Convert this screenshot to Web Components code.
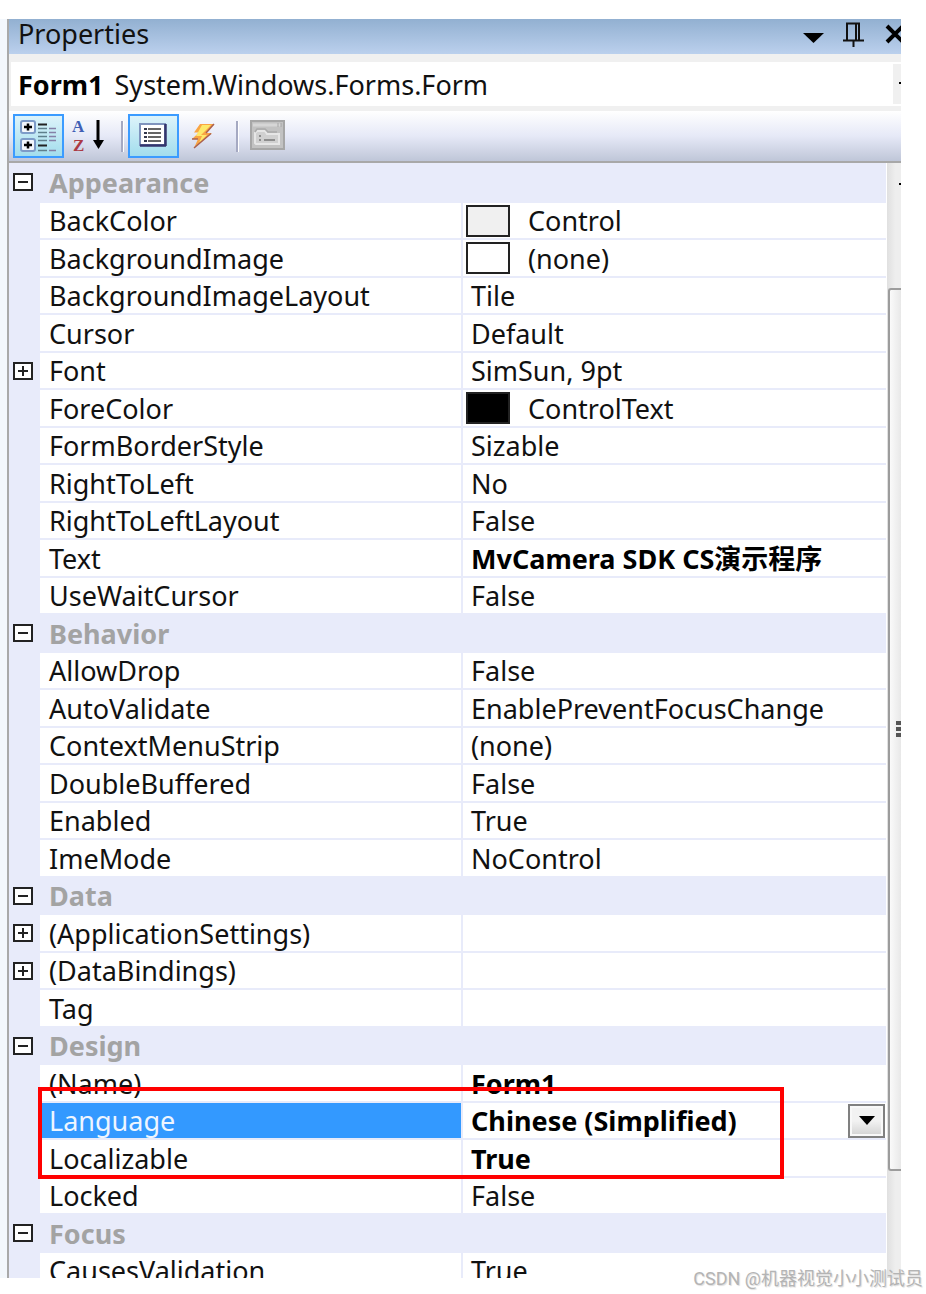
<!DOCTYPE html>
<html lang="en">
<head>
<meta charset="utf-8">
<title>Properties</title>
<style>
  body {
    margin: 0;
    background: white;
    color: #111;
    font-family: "Noto Sans", "Noto Sans CJK SC", sans-serif;
    font-size: 27px;
  }
</style>
</head>
<body>
<properties-window>
  <title-bar slot="title">Properties</title-bar>
  <object-picker slot="picker" name="Form1">System.Windows.Forms.Form</object-picker>
  <tool-strip slot="tools"></tool-strip>
  <property-grid></property-grid>
  <scroll-strip slot="scroll"></scroll-strip>
</properties-window>
<water-mark>CSDN @机器视觉小小测试员</water-mark>

<script>
// outer frame: title, picker, tools, then grid + scrollbar
class PropertiesWindow extends HTMLElement {
  constructor() {
    super()
    this.attachShadow({mode: 'open'})
    this.shadowRoot.innerHTML = `
      <style>
        :host {
          display: block;
          height: 100vh;
          box-sizing: border-box;
          padding: 19px 25px 16px 0;
        }
        .edge {
          height: 100%;
          box-sizing: border-box;
          padding-left: 7px;
          background: #f3f7fc;
        }
        section {
          display: flex;
          flex-direction: column;
          height: 100%;
          box-sizing: border-box;
          border-left: 2px solid #a9a9a9;
          background: #f0f0f0;
        }
        .body {
          display: flex;
          flex: 1;
          min-height: 0;
          background: white;
        }
        .grid {
          flex: 1;
          min-width: 0;
          padding-right: 1px;
          overflow: hidden;
        }
      </style>
      <div class="edge">
        <section aria-label="Properties">
          <slot name="title"></slot>
          <slot name="picker"></slot>
          <slot name="tools"></slot>
          <div class="body">
            <div class="grid"><slot></slot></div>
            <slot name="scroll"></slot>
          </div>
        </section>
      </div>
    `
  }
}

class TitleBar extends HTMLElement {
  constructor() {
    super()
    this.attachShadow({mode: 'open'})
    this.shadowRoot.innerHTML = `
      <style>
        :host {
          display: flex;
          flex: none;
          align-items: flex-start;
          height: 35px;
          padding-left: 9px;
          background: linear-gradient(#92b0d1, #bbd0ed);
        }
        h1 {
          flex: 1;
          margin: 0;
          font-size: 27px;
          font-weight: 400;
          line-height: 30px;
        }
        nav {
          display: flex;
          width: 107px;
          overflow: hidden;
        }
        button {
          flex: none;
          width: 40px;
          height: 35px;
          padding: 0;
          border: 0;
          background: none;
        }
        svg { display: block; }
      </style>
      <h1><slot></slot></h1>
      <nav>
        <button aria-label="Window position"><svg width="40" height="35"><path d="M9 14h21l-10.500 10z"/></svg></button>
        <button aria-label="Auto hide"><svg width="40" height="35"><path d="M12 4.500h14M13 4v17M22 4v17M25 4v17M9 21.500h21M19.500 22v6" fill="none" stroke="#111" stroke-width="2"/></svg></button>
        <button aria-label="Close"><svg width="40" height="35"><path d="M13 7l16 16M29 7L13 23" fill="none" stroke="#000" stroke-width="4"/></svg></button>
      </nav>
    `
  }
}

class ObjectPicker extends HTMLElement {
  constructor() {
    super()
    this.attachShadow({mode: 'open'})
  }

  connectedCallback() {
    this.shadowRoot.innerHTML = `
      <style>
        :host {
          display: block;
          flex: none;
          padding: 8px 0 5px 2px;
          background: #f0f0f0;
        }
        button {
          display: flex;
          align-items: center;
          gap: 11px;
          width: 100%;
          height: 44px;
          padding: 0 0 0 7px;
          border: 0;
          background: white;
          color: inherit;
          font: inherit;
        }
        b { color: black; }
        svg {
          margin-left: auto;
          background: #f0f0f0;
        }
      </style>
      <button aria-haspopup="listbox">
        <b>${this.getAttribute('name')}</b>
        <span><slot></slot></span>
        <svg width="8" height="40"><path d="M6 18h2v2h-2z"/></svg>
      </button>
    `
  }
}

class ToolStrip extends HTMLElement {
  constructor() {
    super()
    this.attachShadow({mode: 'open'})
    this.shadowRoot.innerHTML = `
      <style>
        :host {
          display: flex;
          flex: none;
          height: 50px;
          padding-left: 4px;
          align-items: center;
          border-bottom: 2px solid #a8a8a8;
          background: linear-gradient(#fff, #e6e9f7 50%, #bfc6d8);
        }
        button {
          width: 51px;
          height: 44px;
          padding: 0;
          border: 0;
          background: none;
        }
        button[aria-pressed=true] {
          background: linear-gradient(#e0f4fb, #9fdcec);
          box-shadow: inset 0 0 0 2px #3b9bff;
        }
        i {
          flex: none;
          width: 3px;
          height: 31px;
          box-sizing: border-box;
          margin: 0 4px 0 6px;
          border-right: 1px solid white;
          background: #a5a9c2;
        }
        svg { display: block; }
        text {
          font: bold 17px "Liberation Serif", serif;
        }
      </style>
      <button aria-label="Categorized" aria-pressed="true">
        <svg width="51" height="44">
          <g fill="#f2f6fc" stroke="#7d9bc8" stroke-width="2">
            <rect x="8" y="7" width="14" height="12" rx="2"/>
            <rect x="8" y="25" width="14" height="12" rx="2"/>
          </g>
          <path d="M11 13h8M15 9.500v7M11 31h8M15 27.500v7" stroke="#000" stroke-width="2.500"/>
          <path d="M25 10.500h9M25 31.500h9" stroke="#222" stroke-width="2"/>
          <path d="M25 14.500h9M25 18.500h9M25 22.500h9M25 26.500h9M25 36.500h9" stroke="#5f7f8c" stroke-width="1.500"/>
          <path d="M36 14.500h7M36 18.500h7M36 22.500h7M36 26.500h7M36 36.500h7" stroke="#8580a8" stroke-width="1.500"/>
        </svg>
      </button>
      <button aria-label="Alphabetical">
        <svg width="51" height="44">
          <text x="8" y="18" fill="#3f5fb5">A</text>
          <text x="9" y="37" fill="#ab3a44">Z</text>
          <path d="M34 6v22" stroke="#000" stroke-width="3"/>
          <path d="M29 26h11l-5.500 9z"/>
        </svg>
      </button>
      <i></i>
      <button aria-label="Properties" aria-pressed="true">
        <svg width="51" height="44">
          <rect x="12" y="10" width="25" height="21" fill="#fff" stroke="#7f94bd" stroke-width="2"/>
          <path d="M12 31.500h26M37.500 10v22" stroke="#34356c" stroke-width="2.500"/>
          <path d="M16 15h3M16 19h3M16 23h3M16 27h3" stroke="#33384c" stroke-width="2"/>
          <path d="M20 15h13M20 19h13M20 23h13M20 27h13" stroke="#333" stroke-width="1.500"/>
        </svg>
      </button>
      <button aria-label="Events">
        <svg width="51" height="44">
          <path d="M21 10h14l-8 9h6L15 34l4-9h-6l7-6.500h-5z" fill="#f9a544"/>
          <path d="M23 11h9L22 21h6l-8 8 3-7h-6z" fill="#fde96b"/>
          <path d="M35 10l-8 9M32 19.500L15 34M19 25h-6" fill="none" stroke="#a96050" stroke-width="1.500"/>
        </svg>
      </button>
      <i></i>
      <button aria-label="Property Pages" disabled>
        <svg width="51" height="44">
          <rect x="8" y="7" width="33" height="28" fill="#c2c2c2" stroke="#a6a6a6" stroke-width="2"/>
          <path d="M10 11h28" stroke="#d6d6d6" stroke-width="3"/>
          <path d="M35 9v4M38 9v4" stroke="#a6a6a6"/>
          <path d="M12 29V19l2-2h8l2 3h12v10H13z" fill="#d0d0d0" stroke="#e6e6e6" stroke-width="2"/>
          <path d="M12 18l2-3h8l3 3h9" fill="none" stroke="#aaa" stroke-width="1.500"/>
          <path d="M16 22h2M16 26h2M21 26h11" stroke="#8d8d8d" stroke-width="2"/>
        </svg>
      </button>
    `
  }
}

// [name, value, options]; a row without a value is a category
const rows = [
  ['Appearance'],
  ['BackColor', 'Control', {swatch: '#f0f0f0'}],
  ['BackgroundImage', '(none)', {swatch: '#fff'}],
  ['BackgroundImageLayout', 'Tile'],
  ['Cursor', 'Default'],
  ['Font', 'SimSun, 9pt', {expand: true}],
  ['ForeColor', 'ControlText', {swatch: '#000'}],
  ['FormBorderStyle', 'Sizable'],
  ['RightToLeft', 'No'],
  ['RightToLeftLayout', 'False'],
  ['Text', 'MvCamera SDK CS演示程序', {bold: true}],
  ['UseWaitCursor', 'False'],
  ['Behavior'],
  ['AllowDrop', 'False'],
  ['AutoValidate', 'EnablePreventFocusChange'],
  ['ContextMenuStrip', '(none)'],
  ['DoubleBuffered', 'False'],
  ['Enabled', 'True'],
  ['ImeMode', 'NoControl'],
  ['Data'],
  ['(ApplicationSettings)', '', {expand: true}],
  ['(DataBindings)', '', {expand: true}],
  ['Tag', ''],
  ['Design'],
  ['(Name)', 'Form1', {bold: true}],
  ['Language', 'Chinese (Simplified)', {bold: true, select: true}],
  ['Localizable', 'True', {bold: true}],
  ['Locked', 'False'],
  ['Focus'],
  ['CausesValidation', 'True']
]

class PropertyGrid extends HTMLElement {
  constructor() {
    super()
    this.attachShadow({mode: 'open'})
  }

  expander(open, name) {
    return `
      <button class="box" aria-expanded="${open}" aria-label="${name}">
        <svg width="20" height="18">
          <rect x="1" y="1" width="18" height="16" fill="white" stroke="#222" stroke-width="2"/>
          <path d="M5 9h10${open ? '' : 'M10 4v10'}" stroke="#222" stroke-width="2"/>
        </svg>
      </button>`
  }

  row([name, value, opt = {}]) {
    if (value === undefined) {
      return `
        <tr class="category">
          <td class="gutter">${this.expander(true, name)}</td>
          <th colspan="2" scope="colgroup">${name}</th>
        </tr>`
    }
    let cell = value
    if (opt.swatch) {
      cell = `<div class="color"><span style="background: ${opt.swatch}"></span>${value}</div>`
    }
    if (opt.select) {
      cell = `
        <div class="edit">
          <select aria-labelledby="language"><option>${value}</option></select>
          <button class="drop" aria-label="Open list">
            <svg width="16" height="9"><path d="M0 0h16l-8 9z"/></svg>
          </button>
        </div>
        <mark-box></mark-box>`
    }
    return `
      <tr class="${opt.select ? 'selected' : ''}">
        <td class="gutter">${opt.expand ? this.expander(false, name) : ''}</td>
        <th scope="row" ${opt.select ? 'id="language"' : ''}>${name}</th>
        <td class="${opt.bold ? 'bold' : ''}">${cell}</td>
      </tr>`
  }

  connectedCallback() {
    this.shadowRoot.innerHTML = `
      <style>
        :host { display: block; }
        table {
          width: 100%;
          table-layout: fixed;
          border-spacing: 0;
          background: white;
        }
        .icons { width: 31px; }
        tr { height: 37px; }
        tr:nth-child(odd) { height: 38px; }
        tr:first-child { height: 40px; }
        td, th {
          padding: 0 0 0 8px;
          border-bottom: 2px solid #e8ebfa;
          font-weight: 400;
          line-height: 35px;
          text-align: left;
          white-space: nowrap;
        }
        th {
          padding-left: 9px;
          border-right: 2px solid #e8ebfa;
        }
        td.gutter {
          padding: 0 0 0 4px;
          background: #e8ebfa;
        }
        .category th {
          background: #e8ebfa;
          color: #a3a3a3;
          font-weight: 700;
        }
        .bold {
          color: black;
          font-weight: 700;
        }
        .box {
          display: block;
          padding: 0;
          border: 0;
          background: none;
        }
        svg { display: block; }
        .color {
          display: flex;
          align-items: center;
          gap: 18px;
          margin-left: -5px;
        }
        .color span {
          width: 44px;
          height: 32px;
          box-sizing: border-box;
          border: 2px solid #222;
        }
        .selected { position: relative; }
        .selected th {
          background: #39f;
          background-clip: padding-box;
          color: #eef5ff;
        }
        .edit {
          display: flex;
          align-items: center;
          height: 34px;
          padding-right: 1px;
        }
        select {
          flex: 1;
          min-width: 0;
          height: 34px;
          padding: 0;
          border: 0;
          appearance: none;
          background: none;
          color: inherit;
          font: inherit;
          line-height: 34px;
        }
        .drop {
          display: grid;
          place-items: center;
          width: 37px;
          height: 34px;
          padding: 0;
          border: 2px solid #808080;
          background: linear-gradient(#f2f2f2 50%, #d2d2d2);
          box-shadow: inset 0 0 0 2px #f8f8f8;
        }
        mark-box {
          position: absolute;
          z-index: 1;
          top: -16px;
          right: 102px;
          left: 29px;
          height: 92px;
        }
      </style>
      <table>
        <colgroup><col class="icons"><col><col></colgroup>
        <tbody>${rows.map(r => this.row(r)).join('')}</tbody>
      </table>
    `
  }
}

// red outline drawn round the rows of interest
class MarkBox extends HTMLElement {
  constructor() {
    super()
    this.attachShadow({mode: 'open'})
    this.shadowRoot.innerHTML = `
      <style>
        :host {
          display: block;
          box-sizing: border-box;
          border: 4px solid red;
          pointer-events: none;
        }
      </style>
    `
  }
}

class ScrollStrip extends HTMLElement {
  constructor() {
    super()
    this.attachShadow({mode: 'open'})
    this.shadowRoot.innerHTML = `
      <style>
        :host {
          display: flex;
          flex-direction: column;
          flex: none;
          width: 14px;
          background: linear-gradient(90deg, #e0e0e0, #eee 60%);
        }
        .up {
          height: 125px;
        }
        .thumb {
          display: flex;
          align-items: center;
          justify-content: flex-end;
          flex: 1;
          margin: 0 0 107px 1px;
          border: 2px solid #9c9c9c;
          border-right: 0;
          border-radius: 3px 0 0 3px;
          background: linear-gradient(90deg, #fafafa, #e8e8e8);
        }
        svg { display: block; }
      </style>
      <div class="up"><svg width="14" height="40"><path d="M12 20h2v2h-2z"/></svg></div>
      <div class="thumb">
        <svg width="5" height="17"><path d="M0 2h5M0 8h5M0 14h5" stroke="#555" stroke-width="4"/></svg>
      </div>
    `
  }
}

class WaterMark extends HTMLElement {
  constructor() {
    super()
    this.attachShadow({mode: 'open'})
    this.shadowRoot.innerHTML = `
      <style>
        :host {
          position: absolute;
          right: 3px;
          bottom: 2px;
          z-index: 2;
          color: #b4b4b4;
          font: 18px/26px Roboto, "Noto Sans CJK SC", sans-serif;
          text-shadow: 1px 1px 1px #ddd;
        }
      </style>
      <slot></slot>
    `
  }
}

customElements.define('properties-window', PropertiesWindow)
customElements.define('title-bar', TitleBar)
customElements.define('object-picker', ObjectPicker)
customElements.define('tool-strip', ToolStrip)
customElements.define('mark-box', MarkBox)
customElements.define('property-grid', PropertyGrid)
customElements.define('scroll-strip', ScrollStrip)
customElements.define('water-mark', WaterMark)
</script>
</body>
</html>
